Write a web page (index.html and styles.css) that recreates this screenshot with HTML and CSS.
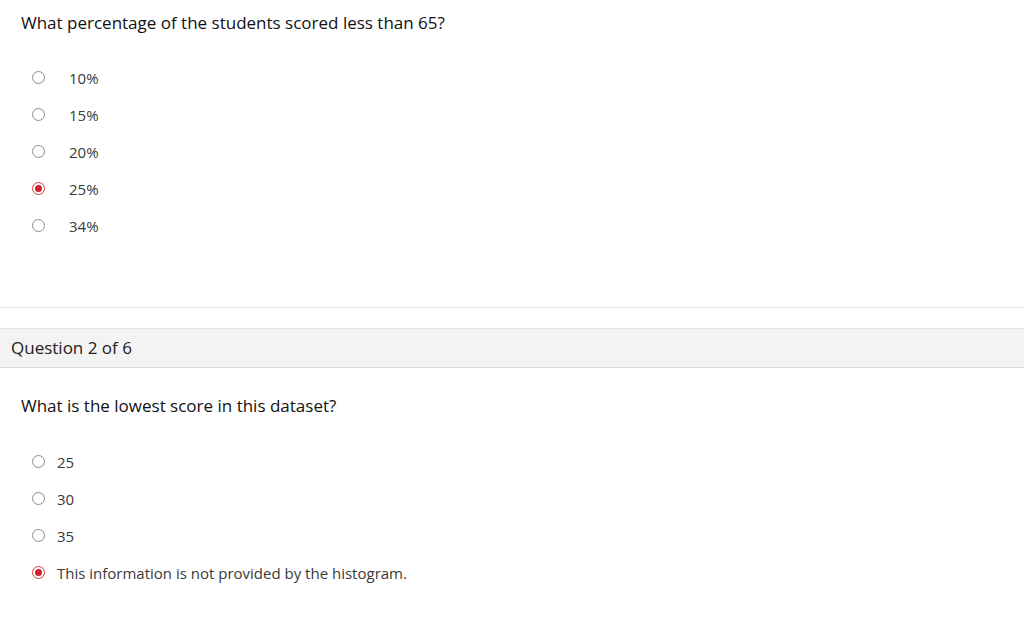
FILE: index.html
```html
<!DOCTYPE html>
<html>
<head>
<meta charset="utf-8">
<link rel="stylesheet" href="styles.css">
</head>
<body>
<section class="question">
  <p class="prompt">What percentage of the students scored less than 65?</p>
  <ul class="options wide">
    <li><span class="radio"></span><span class="label">10%</span></li>
    <li><span class="radio"></span><span class="label">15%</span></li>
    <li><span class="radio"></span><span class="label">20%</span></li>
    <li><span class="radio checked"></span><span class="label">25%</span></li>
    <li><span class="radio"></span><span class="label">34%</span></li>
  </ul>
</section>
<hr class="divider">
<header class="qheader">Question 2 of 6</header>
<section class="question q2">
  <p class="prompt">What is the lowest score in this dataset?</p>
  <ul class="options narrow">
    <li><span class="radio"></span><span class="label">25</span></li>
    <li><span class="radio"></span><span class="label">30</span></li>
    <li><span class="radio"></span><span class="label">35</span></li>
    <li><span class="radio checked"></span><span class="label">This information is not provided by the histogram.</span></li>
  </ul>
</section>
</body>
</html>
```
FILE: styles.css
```css
html, body {
  margin: 0;
  padding: 0;
  background: #ffffff;
}
body {
  font-family: "Open Sans", "Liberation Sans", sans-serif;
  color: #1a1a1a;
}
.question {
  padding: 12px 0 0 21px;
}
.prompt {
  margin: 0;
  font-size: 17px;
  line-height: 22px;
  color: #111111;
}
.options {
  list-style: none;
  margin: 25px 0 0 0;
  padding: 0;
}
.options li {
  display: flex;
  align-items: center;
  height: 37px;
}
.radio {
  box-sizing: border-box;
  width: 13px;
  height: 13px;
  border: 1px solid #8c8c8c;
  border-radius: 50%;
  margin-left: 11px;
  display: flex;
  align-items: center;
  justify-content: center;
  flex: none;
}
.radio.checked {
  border-color: #d9383e;
}
.radio.checked::after {
  content: "";
  width: 7px;
  height: 7px;
  border-radius: 50%;
  background: #d4202a;
}
.label {
  font-size: 15px;
  color: #3a3a3a;
}
.wide .label { margin-left: 24px; }
.narrow .label { margin-left: 12px; }
.divider {
  margin: 63px 0 0 0;
  border: 0;
  border-top: 1px solid #e6e6e6;
  height: 0;
}
.qheader {
  margin-top: 20px;
  height: 38px;
  border-top: 1px solid #e2e2e2;
  border-bottom: 1px solid #dcdcdc;
  background: #f3f3f3;
  padding-left: 11px;
  font-size: 17px;
  line-height: 38px;
  color: #222222;
}
.q2 {
  padding-top: 27px;
}
.q2 .options {
  margin-top: 26px;
}
```
